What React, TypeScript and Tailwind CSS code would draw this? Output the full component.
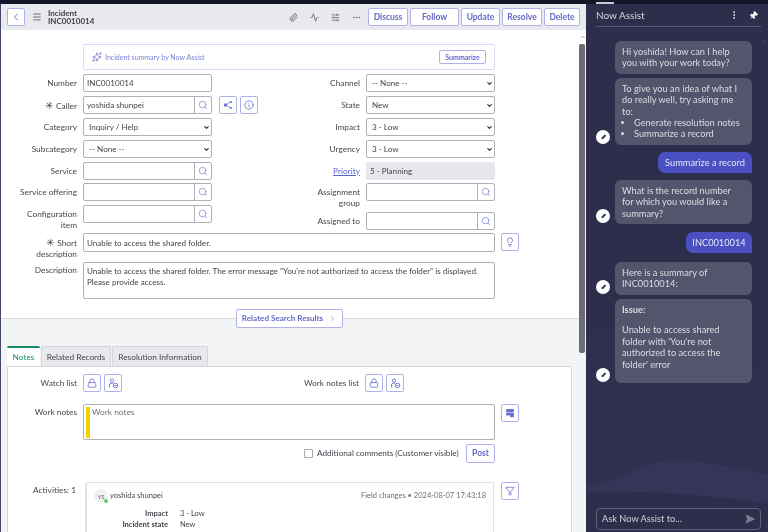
import {
  Activity,
  ChevronLeft,
  ChevronRight,
  ChevronUp,
  ChevronDown,
  Ellipsis,
  EllipsisVertical,
  Filter,
  Info,
  Lightbulb,
  Lock,
  Menu,
  Paperclip,
  Pin,
  Search,
  SendHorizontal,
  SlidersHorizontal,
  Sparkles,
} from "lucide-react";
import type { ReactNode } from "react";

const iconBtn =
  "flex h-[18px] w-[18px] shrink-0 items-center justify-center rounded-[2px] border border-[#b0b1ea] bg-white text-[#6d70cf]";
const boxClass =
  "h-[18px] w-[129px] rounded-[2px] border border-[#aeb0b8] bg-white px-[3px] text-[8.1px] text-[#44464e] outline-none";
const labelClass = "shrink-0 text-right text-[8.3px] leading-[10.5px] text-[#44464e]";

function IconButton({ children }: { children: ReactNode }) {
  return <button className={iconBtn}>{children}</button>;
}

function Row({ label, width = 77, children, required }: { label: ReactNode; width?: number; children: ReactNode; required?: boolean }) {
  return (
    <div className="flex items-start">
      <label className={`${labelClass} pt-[4px] pr-[1px]`} style={{ width }}>
        {required && <span className="mr-[3px] text-[10px] leading-[10px]">✳</span>}
        {label}
      </label>
      <div className="ml-[5px] flex gap-[3px]">{children}</div>
    </div>
  );
}

function Lookup({ value = "" }: { value?: string }) {
  return (
    <div className="flex h-[18px] w-[129px] rounded-[2px] border border-[#aeb0b8] bg-white">
      <input readOnly defaultValue={value} className="w-[111px] px-[3px] text-[8.1px] text-[#44464e] outline-none" />
      <span className="flex w-[17px] items-center justify-center border-l border-[#aeb0b8] text-[#8f92dc]">
        <Search size={10} />
      </span>
    </div>
  );
}

function Choice({ value }: { value: string }) {
  return (
    <div className="relative h-[18px]">
      <select defaultValue={value} className={`${boxClass} block appearance-none pl-[5px]`}>
        <option>{value}</option>
      </select>
      <ChevronDown size={7} strokeWidth={4} className="absolute top-[6px] right-[2px] text-[#33353c]" />
    </div>
  );
}

function HeaderButton({ label, w }: { label: string; w: string }) {
  return (
    <button className={`h-[18px] ${w} rounded-[2px] border border-[#b0b1ea] bg-white text-[8.5px] font-bold text-[#6468c9]`}>
      {label}
    </button>
  );
}

// person with a small badge, used on the watch list buttons
function WatchIcon() {
  return (
    <svg width="11" height="11" viewBox="0 0 11 11" fill="none" stroke="currentColor" strokeWidth=".9">
      <circle cx="4" cy="2.6" r="1.7" />
      <path d="M1.5 9.5V7a2.2 2.2 0 0 1 4-1" />
      <circle cx="7.5" cy="7.5" r="2.3" />
      <path d="M6.2 7.5h2.6" />
    </svg>
  );
}

function Bubble({ children, avatar, className = "" }: { children: ReactNode; avatar?: boolean; className?: string }) {
  return (
    <div className="relative ml-[19px] w-[137px]">
      {avatar && (
        <span className="absolute bottom-[1px] left-[-19px] flex h-[14px] w-[14px] items-center justify-center rounded-full bg-white">
          <span className="h-[1.5px] w-[5px] -rotate-45 bg-[#33344f]" />
        </span>
      )}
      <div className={`rounded-[6px] bg-[#54546c] py-[5px] pl-[7px] text-[9.25px] leading-[11.4px] text-[#dcdce3] ${className || "pr-[7px]"}`}>
        {children}
      </div>
    </div>
  );
}

function UserBubble({ children, w }: { children: ReactNode; w: string }) {
  return (
    <div className={`h-[21px] ${w} self-end rounded-l-[7px] rounded-tr-[7px] bg-[#4a50c0] text-center text-[9.25px] leading-[21px] text-[#e4e5f6]`}>
      {children}
    </div>
  );
}

export default function App() {
  return (
    <div className="relative h-[532px] w-[768px] overflow-hidden bg-[#2d2d4c] font-['Lato',sans-serif] blur-[0.4px]">
      <div className="h-[4px] bg-[#14162a]" />
      <div className="flex h-[528px]">
        <div className="w-[1px] bg-[#44466c]" />
        <div className="flex w-[585px] flex-col">
          <header className="flex h-[26px] items-center bg-[#e9eaed] pl-[6px]">
            <button className="flex h-[18px] w-[18px] items-center justify-center rounded-[2px] border border-[#b0b1ea] bg-white text-[#7477d6]">
              <ChevronLeft size={12} />
            </button>
            <Menu size={10} className="ml-[7px] text-[#55575f]" />
            <div className="ml-[6px] text-[8px] leading-[8.5px] font-bold text-[#3c3e46]">
              <div>Incident</div>
              <div>INC0010014</div>
            </div>
            <div className="ml-auto flex items-center gap-[12px] text-[#5a5c66]">
              <Paperclip size={9} />
              <Activity size={9} />
              <SlidersHorizontal size={9} />
              <Ellipsis size={9} />
            </div>
            <div className="mr-[6px] ml-[7px] flex gap-[2px]">
              <HeaderButton label="Discuss" w="w-[40px]" />
              <HeaderButton label="Follow" w="w-[49px]" />
              <HeaderButton label="Update" w="w-[39px]" />
              <HeaderButton label="Resolve" w="w-[40px]" />
              <HeaderButton label="Delete" w="w-[36px]" />
            </div>
          </header>

          <div className="flex min-h-0 flex-1">
            <main className="w-[578px] overflow-hidden bg-[#f3f4f6]">
              <section className="relative h-[289px] border-b border-[#d9dade] bg-white pt-[14px]">
                <div className="ml-[82px] flex h-[26px] w-[412px] items-center rounded-[2px] border border-[#d9d9fa] px-[8px] text-[7px] text-[#7d80d8]">
                  <Sparkles size={10} />
                  <span className="ml-[3px]">Incident summary by Now Assist</span>
                  <button className="ml-auto h-[14px] w-[47px] rounded-[2px] border border-[#b0b1ea] text-[7px] font-bold text-[#6468c9]">
                    Summarize
                  </button>
                </div>

                <div className="mt-[4px] grid grid-cols-[212px_283px]">
                  <div className="flex flex-col gap-[3.9px]">
                    <Row label="Number">
                      <input readOnly defaultValue="INC0010014" className={boxClass} />
                    </Row>
                    <Row label="Caller" required>
                      <Lookup value="yoshida shunpei" />
                      <span className="w-[1px]" />
                      <IconButton>
                        <svg width="10" height="10" viewBox="0 0 10 10" fill="currentColor">
                          <circle cx="2.5" cy="5" r="1.7" />
                          <circle cx="8" cy="2" r="1.1" />
                          <circle cx="8" cy="8" r="1.1" />
                          <path d="M3.5 4.5 7.5 2M3.5 5.5 7.5 8" stroke="currentColor" strokeWidth=".8" />
                        </svg>
                      </IconButton>
                      <IconButton>
                        <Info size={10} />
                      </IconButton>
                    </Row>
                    <Row label="Category">
                      <Choice value="Inquiry / Help" />
                    </Row>
                    <Row label="Subcategory">
                      <Choice value="-- None --" />
                    </Row>
                    <Row label="Service">
                      <Lookup />
                    </Row>
                    <Row label="Service offering">
                      <Lookup />
                    </Row>
                    <div className="h-[25px]">
                      <Row label={<>Configuration<br />item</>}>
                        <Lookup />
                      </Row>
                    </div>
                  </div>

                  <div className="flex flex-col gap-[3.9px]">
                    {[
                      ["Channel", "-- None --"],
                      ["State", "New"],
                      ["Impact", "3 - Low"],
                      ["Urgency", "3 - Low"],
                    ].map(([label, value]) => (
                      <Row key={label} label={label} width={148}>
                        <Choice value={value} />
                      </Row>
                    ))}
                    <div className="flex items-start">
                      <a className={`${labelClass} w-[148px] pt-[4px] pr-[1px] !text-[#5a62cf] underline`}>Priority</a>
                      <div className="ml-[5px] h-[18px] w-[129px] rounded-[2px] bg-[#e6e7ea] px-[4px] text-[8.1px] leading-[18px] text-[#44464e]">
                        5 - Planning
                      </div>
                    </div>
                    <div className="h-[25px]">
                      <Row label={<>Assignment<br />group</>} width={148}>
                        <Lookup />
                      </Row>
                    </div>
                    <Row label="Assigned to" width={148}>
                      <Lookup />
                    </Row>
                  </div>
                </div>

                <div className="mt-[3px] flex h-[19px] items-start">
                  <label className={`${labelClass} w-[77px] pt-[4px] pr-[1px]`}>
                    <span className="mr-[3px] text-[10px] leading-[10px]">✳</span>Short
                    <br />
                    description
                  </label>
                  <input
                    readOnly
                    defaultValue="Unable to access the shared folder."
                    className="ml-[5px] h-[19px] w-[412px] rounded-[2px] border border-[#aeb0b8] px-[3px] text-[8.1px] text-[#44464e] outline-none"
                  />
                  <span className="ml-[6px]">
                    <IconButton>
                      <Lightbulb size={10} />
                    </IconButton>
                  </span>
                </div>

                <div className="mt-[10px] flex items-start">
                  <label className={`${labelClass} w-[77px] pt-[3px] pr-[1px]`}>Description</label>
                  <textarea
                    readOnly
                    defaultValue={`Unable to access the shared folder. The error message "You're not authorized to access the folder" is displayed. Please provide access.`}
                    className="ml-[5px] h-[37px] w-[412px] resize-none rounded-[2px] border border-[#aeb0b8] px-[3px] py-[3px] text-[8.1px] leading-[10.5px] text-[#44464e] outline-none"
                  />
                </div>

                <button className="absolute bottom-[-10px] left-[235px] flex h-[19px] w-[107px] items-center justify-center gap-[5px] rounded-[2px] border border-[#b0b1ea] bg-white text-[8.1px] font-bold text-[#6468c9]">
                  Related Search Results
                  <ChevronRight size={9} className="text-[#8f92dc]" />
                </button>
              </section>

              <div className="mt-[27px] ml-[6px] flex h-[20px] gap-[1px] text-[8.3px] leading-[20px]">
                <span className="w-[33px] rounded-t-[2px] border-t-2 border-[#1b8a6b] bg-white text-center leading-[18px] text-[#1b8a6b]">Notes</span>
                <span className="w-[70px] rounded-t-[2px] border border-b-0 border-[#d5d6db] bg-[#e8e9ec] text-center text-[#44464e]">Related Records</span>
                <span className="w-[96px] rounded-t-[2px] border border-b-0 border-[#d5d6db] bg-[#e8e9ec] text-center text-[#44464e]">Resolution Information</span>
              </div>

              <section className="ml-[6px] h-[200px] w-[565px] rounded-t-[2px] border border-[#d5d6db] bg-white pt-[7px]">
                <div className="flex">
                  <Row label="Watch list" width={70}>
                    <IconButton>
                      <Lock size={10} />
                    </IconButton>
                    <IconButton>
                      <WatchIcon />
                    </IconButton>
                  </Row>
                  <div className="ml-[68px]">
                    <Row label="Work notes list" width={170}>
                      <IconButton>
                        <Lock size={10} />
                      </IconButton>
                      <IconButton>
                        <WatchIcon />
                      </IconButton>
                    </Row>
                  </div>
                </div>

                <div className="mt-[12px] flex items-start">
                  <label className={`${labelClass} w-[70px] pt-[3px] pr-[1px]`}>Work notes</label>
                  <div className="relative ml-[5px] h-[36px] w-[412px] rounded-[2px] border border-[#aeb0b8] bg-white pt-[1px] pl-[8px] text-[8.3px] leading-[13px] text-[#72747c]">
                    <span className="absolute top-[2px] left-[2px] h-[31px] w-[4px] bg-[#f5cf00]" />
                    Work notes
                  </div>
                  <span className="ml-[6px]">
                    <IconButton>
                      <svg width="10" height="10" viewBox="0 0 10 10" fill="currentColor">
                        <rect x="1" y="1" width="8" height="3" rx="1.2" />
                        <rect x="1" y="4.6" width="8" height="3" rx="1.2" />
                        <rect x="5" y="7" width="4" height="2.2" rx="1" />
                      </svg>
                    </IconButton>
                  </span>
                </div>

                <div className="mt-[4px] ml-[296px] flex h-[19px] items-center">
                  <span className="h-[9px] w-[9px] rounded-[1px] border border-[#a9aab1]" />
                  <span className="ml-[4px] w-[144px] text-[8.2px] whitespace-nowrap text-[#44464e]">Additional comments (Customer visible)</span>
                  <button className="ml-[5px] h-[19px] w-[29px] rounded-[2px] border border-[#b0b1ea] text-[8.5px] font-bold text-[#6468c9]">Post</button>
                </div>

                <div className="mt-[19px] flex items-start">
                  <label className={`${labelClass} w-[68px] pt-[3px]`}>Activities: 1</label>
                  <div className="ml-[9px] h-[60px] w-[409px] rounded-tl-[2px] border-t border-r border-l-2 border-[#dfe0e4] pt-[6px] pl-[7px]">
                    <div className="flex items-center">
                      <span className="relative flex h-[14px] w-[14px] items-center justify-center rounded-full bg-[#f0f1f3] text-[6px] text-[#60626a]">
                        YS
                        <span className="absolute right-0 bottom-0 h-[4px] w-[4px] rounded-full bg-[#59d068]" />
                      </span>
                      <span className="ml-[2px] text-[7.5px] text-[#44464e]">yoshida shunpei</span>
                      <span className="mr-[7px] ml-auto text-[7.5px] text-[#6c6e76]">Field changes • 2024-08-07 17:43:18</span>
                    </div>
                    <div className="mt-[5px] grid grid-cols-[74px_auto] gap-x-[12px] text-[7.5px] leading-[11px] text-[#44464e]">
                      <span className="text-right font-bold">Impact</span>
                      <span>3 - Low</span>
                      <span className="text-right font-bold">Incident state</span>
                      <span>New</span>
                    </div>
                  </div>
                  <span className="ml-[7px]">
                    <IconButton>
                      <Filter size={10} />
                    </IconButton>
                  </span>
                </div>
              </section>
            </main>

            <div className="flex w-[7px] flex-col bg-[#f3f4f6]">
              <div className="flex h-[14px] items-center justify-center bg-white text-[#55575f]">
                <ChevronUp size={6} />
              </div>
              <div className="mr-[1px] h-[309px] rounded-[2px] bg-[#6c6c72]" />
            </div>
          </div>
        </div>

        <aside className="relative flex-1 pr-[7px] pl-[10px]">
          <svg className="absolute inset-0 h-full w-full" viewBox="0 0 182 528" preserveAspectRatio="none">
            <path d="M0 330C60 300 120 390 182 360V528H0Z" fill="#2f2f50" />
            <path d="M0 482C30 482 50 458 90 456C120 456 150 466 182 470V528H0Z" fill="#35355a" />
            <path d="M0 488C50 486 120 490 182 500V528H0Z" fill="#2d2d4c" />
          </svg>
          <span className="absolute top-[-2px] left-[10px] h-[2px] w-[18px] bg-[#c9cad6]" />
          <div className="relative flex h-[23px] items-center border-b border-[#5a5a74] text-[10px] text-[#d5d5dd]">
            Now Assist
            <EllipsisVertical size={10} className="ml-auto text-white" />
            <Pin size={9} fill="white" className="mr-[3px] ml-[10px] rotate-45 text-white" />
          </div>
          <div className="relative mt-[14px] flex w-[156px] flex-col">
            <Bubble>Hi yoshida! How can I help you with your work today?</Bubble>
            <div className="h-[4px]" />
            <Bubble avatar>
              To give you an idea of what I do really well, try asking me to:
              <ul className="list-disc pl-[12px]">
                <li>Generate resolution notes</li>
                <li>Summarize a record</li>
              </ul>
            </Bubble>
            <div className="h-[7px]" />
            <UserBubble w="w-[94px]">Summarize a record</UserBubble>
            <div className="h-[7px]" />
            <Bubble avatar className="pr-[14px]">What is the record number for which you would like a summary?</Bubble>
            <div className="h-[8px]" />
            <UserBubble w="w-[66px]">INC0010014</UserBubble>
            <div className="h-[9px]" />
            <Bubble avatar>Here is a summary of INC0010014:</Bubble>
            <div className="h-[4px]" />
            <Bubble avatar className="pr-[7px] pb-[13px]">
              <b className="font-bold">Issue:</b>
              <p className="mt-[9px]">Unable to access shared folder with 'You're not authorized to access the folder' error</p>
            </Bubble>
          </div>
          <ChevronUp size={7} className="absolute top-[34px] right-[1px] text-[#55556e]" />
          <ChevronDown size={7} className="absolute top-[486px] right-[1px] text-[#55556e]" />
          <div className="absolute top-[504px] left-[10px] flex h-[22px] w-[165px] items-center rounded-[4px] border border-[#5f5f78] px-[5px] text-[9.25px] text-[#d0d0d8]">
            Ask Now Assist to...
            <SendHorizontal size={10} fill="#7d7d92" className="ml-auto text-[#7d7d92]" />
          </div>
        </aside>
      </div>
    </div>
  );
}
